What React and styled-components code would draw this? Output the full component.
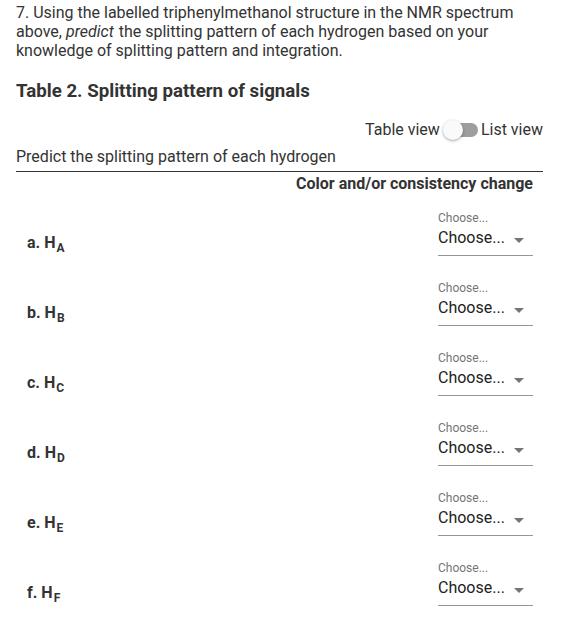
import React from "react";
import styled, { createGlobalStyle } from "styled-components";

const Global = createGlobalStyle`
  html, body { margin: 0; padding: 0; background: #fff; }
  body { font-family: Roboto, "Noto Sans", Arial, sans-serif; color: #333; }
`;

const Page = styled.div`
  padding: 3px 30px 0 16px;
  width: 527px;
`;

const Question = styled.p`
  margin: 0;
  font-size: 16px;
  line-height: 19px;
  color: #333;
  em { font-style: italic; margin-right: 1px; }
`;

const QLine = styled.span`
  display: block;
  white-space: nowrap;
`;

const Heading = styled.h2`
  margin: 20px 0 0;
  font-size: 18.7px;
  line-height: 22px;
  font-weight: 700;
  color: #333;
`;

const ToggleRow = styled.div`
  margin-top: 18px;
  display: flex;
  justify-content: flex-end;
  align-items: center;
  gap: 3px;
  font-size: 16px;
  line-height: 20px;
  color: #333;
`;

const Track = styled.span`
  position: relative;
  display: inline-block;
  width: 35px;
  height: 20px;
`;

const TrackBar = styled.span`
  position: absolute;
  left: 9px;
  right: 0;
  top: 3px;
  height: 14px;
  border-radius: 7px;
  background: #9e9e9e;
`;

const Thumb = styled.span`
  position: absolute;
  left: 0;
  top: 0;
  width: 20px;
  height: 20px;
  border-radius: 50%;
  background: #fafafa;
  box-shadow: 0 1px 3px rgba(0,0,0,0.35);
`;

const Caption = styled.div`
  margin-top: 7px;
  font-size: 16px;
  line-height: 20px;
  padding-bottom: 4px;
  border-bottom: 1px solid #333;
  color: #333;
`;

const Table = styled.div`
  display: grid;
  grid-template-columns: 1fr auto;
`;

const ColHead = styled.div`
  grid-column: 2;
  font-weight: 700;
  font-size: 16px;
  line-height: 20px;
  padding: 2px 10px 14px 0;
  color: #333;
`;

const Label = styled.div`
  grid-column: 1;
  padding-left: 11px;
  font-weight: 700;
  font-size: 16px;
  line-height: 20px;
  color: #333;
  display: flex;
  align-items: center;
  height: 70px;
`;

const Sub = styled.sub`
  font-size: 12px;
  vertical-align: -4px;
  line-height: 0;
  margin-left: 1px;
`;

const Cell = styled.div`
  grid-column: 2;
  display: flex;
  justify-content: flex-end;
  padding-right: 10px;
  height: 70px;
`;

const Select = styled.div`
  width: 95px;
  margin-top: 4px;
  display: flex;
  flex-direction: column;
`;

const SmallLabel = styled.span`
  font-size: 12px;
  line-height: 12px;
  color: #757575;
`;

const Value = styled.div`
  display: flex;
  align-items: center;
  justify-content: space-between;
  font-size: 16px;
  line-height: 20px;
  color: #222;
  padding: 4px 9px 7px 0;
  border-bottom: 1px solid #949494;
`;

const Arrow = styled.span`
  width: 0;
  height: 0;
  border-left: 5px solid transparent;
  border-right: 5px solid transparent;
  border-top: 5px solid #757575;
  margin-top: 4px;
`;

const rows = ["A", "B", "C", "D", "E", "F"];

export default function App() {
  return (
    <>
      <Global />
      <Page>
        <Question>
          <QLine>7. Using the labelled triphenylmethanol structure in the NMR spectrum</QLine>
          <QLine>
            above, <em>predict</em> the splitting pattern of each hydrogen based on your
          </QLine>
          <QLine>knowledge of splitting pattern and integration.</QLine>
        </Question>
        <Heading>Table 2. Splitting pattern of signals</Heading>
        <ToggleRow>
          <span>Table view</span>
          <Track>
            <TrackBar />
            <Thumb />
          </Track>
          <span>List view</span>
        </ToggleRow>
        <Caption>Predict the splitting pattern of each hydrogen</Caption>
        <Table>
          <ColHead>Color and/or consistency change</ColHead>
          {rows.map((r, i) => (
            <React.Fragment key={r}>
              <Label>
                <span>
                  {String.fromCharCode(97 + i)}. H<Sub>{r}</Sub>
                </span>
              </Label>
              <Cell>
                <Select>
                  <SmallLabel>Choose...</SmallLabel>
                  <Value>
                    <span>Choose...</span>
                    <Arrow />
                  </Value>
                </Select>
              </Cell>
            </React.Fragment>
          ))}
        </Table>
      </Page>
    </>
  );
}
